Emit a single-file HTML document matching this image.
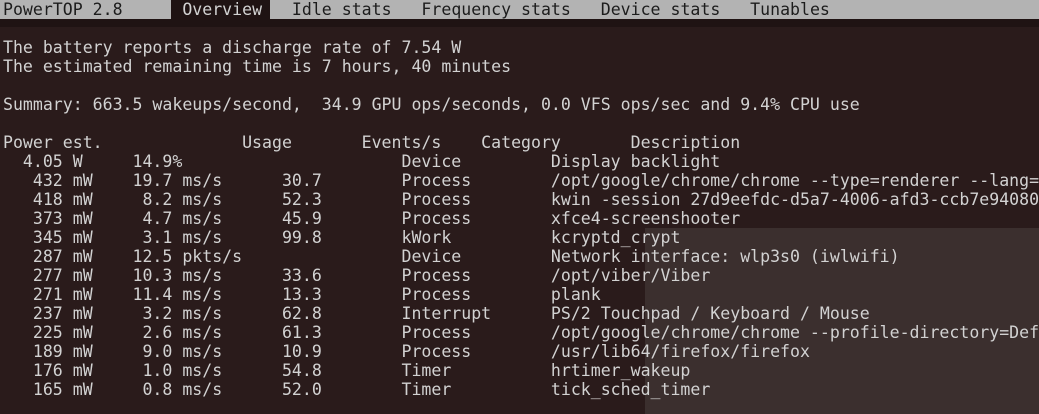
<!DOCTYPE html>
<html><head><style>
html,body{margin:0;padding:0}
body{width:1039px;height:414px;overflow:hidden;background:#2a1b1b;position:relative;font-family:"DejaVu Sans Mono","Liberation Mono",monospace;}
.bg2{position:absolute;left:645px;top:228px;width:394px;height:186px;background:#3b2f2e}
.bg1{position:absolute;left:0;top:19px;width:1039px;height:8px;background:#1f1313}
.bar{position:absolute;left:0;top:0;width:1039px;height:19px;background:#b3b3b3}
.ov{position:absolute;left:171px;top:0;width:99px;height:19px;background:#1f1313}
pre{position:absolute;left:3px;top:0;margin:0;font-family:inherit;font-size:16.56px;line-height:19px;color:#d2d2d2;white-space:pre}
.d{color:#1c1c1c}
</style></head><body>
<div class="bg1"></div>
<div class="bg2"></div>
<div class="bar"></div>
<div class="ov"></div>
<pre><span class="d">PowerTOP 2.8      </span>Overview   <span class="d">Idle stats   Frequency stats   Device stats   Tunables</span>

The battery reports a discharge rate of 7.54 W
The estimated remaining time is 7 hours, 40 minutes

Summary: 663.5 wakeups/second,  34.9 GPU ops/seconds, 0.0 VFS ops/sec and 9.4% CPU use

Power est.              Usage       Events/s    Category       Description
  4.05 W     14.9%                      Device         Display backlight
   432 mW    19.7 ms/s      30.7        Process        /opt/google/chrome/chrome --type=renderer --lang=
   418 mW     8.2 ms/s      52.3        Process        kwin -session 27d9eefdc-d5a7-4006-afd3-ccb7e94080
   373 mW     4.7 ms/s      45.9        Process        xfce4-screenshooter
   345 mW     3.1 ms/s      99.8        kWork          kcryptd_crypt
   287 mW    12.5 pkts/s                Device         Network interface: wlp3s0 (iwlwifi)
   277 mW    10.3 ms/s      33.6        Process        /opt/viber/Viber
   271 mW    11.4 ms/s      13.3        Process        plank
   237 mW     3.2 ms/s      62.8        Interrupt      PS/2 Touchpad / Keyboard / Mouse
   225 mW     2.6 ms/s      61.3        Process        /opt/google/chrome/chrome --profile-directory=Def
   189 mW     9.0 ms/s      10.9        Process        /usr/lib64/firefox/firefox
   176 mW     1.0 ms/s      54.8        Timer          hrtimer_wakeup
   165 mW     0.8 ms/s      52.0        Timer          tick_sched_timer</pre>
</body></html>
